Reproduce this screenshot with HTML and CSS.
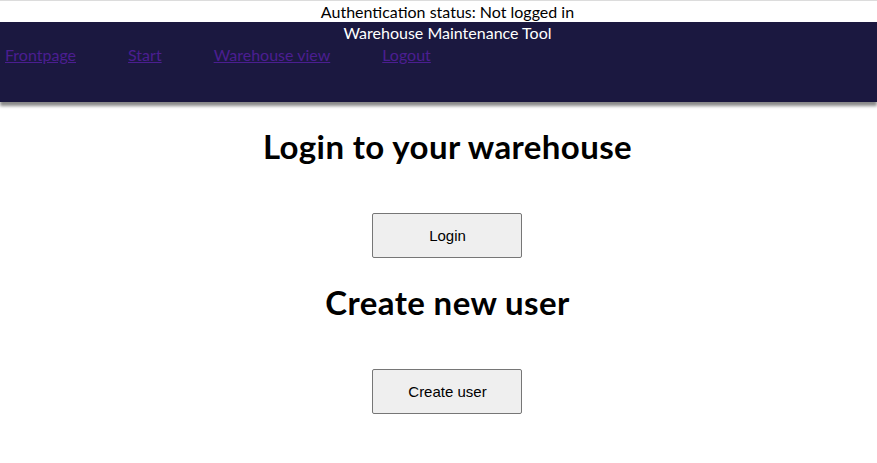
FILE: index.html
```html
<!DOCTYPE html>
<html>
<head>
<meta charset="utf-8">
<link rel="stylesheet" href="styles.css">
</head>
<body>
<div class="page">
  <div class="auth">Authentication status: Not logged in</div>
  <header class="navbar">
    <div class="title">Warehouse Maintenance Tool</div>
    <nav class="links">
      <a href="#">Frontpage</a>
      <a href="#">Start</a>
      <a href="#">Warehouse view</a>
      <a href="#">Logout</a>
    </nav>
  </header>
  <main class="content">
    <section class="block">
      <h1>Login to your warehouse</h1>
      <button class="btn">Login</button>
    </section>
    <section class="block">
      <h1>Create new user</h1>
      <button class="btn">Create user</button>
    </section>
  </main>
</div>
</body>
</html>
```
FILE: styles.css
```css
html, body {
  margin: 0;
  padding: 0;
  background: #ffffff;
}
body {
  font-family: "Lato", "Open Sans", sans-serif;
  font-size: 16px;
  color: #000;
}
.page {
  border-top: 1px solid #dcdcdc;
}
.auth {
  text-align: center;
  height: 21px;
  line-height: 21px;
  padding-left: 18px;
}
.navbar {
  background: #1b1840;
  height: 80px;
  box-shadow: 0 4px 3px #8a8a8a;
}
.title {
  color: #ffffff;
  text-align: center;
  font-size: 16px;
  line-height: 22px;
  padding-left: 18px;
}
.links {
  display: flex;
  gap: 52px;
  padding-left: 5px;
  line-height: 22px;
}
.links a {
  color: #4b1e91;
  text-decoration: underline;
}
.content {
  display: flex;
  flex-direction: column;
  align-items: center;
  padding-left: 18px;
}
.block {
  display: flex;
  flex-direction: column;
  align-items: center;
}
.block h1 {
  font-size: 33px;
  letter-spacing: 0.4px;
  font-weight: 700;
  margin: 0;
  line-height: 43px;
}
.block:first-child h1 {
  margin-top: 23px;
}
.btn {
  margin-top: 45px;
  margin-bottom: 23px;
  width: 150px;
  height: 45px;
  font-family: "Liberation Sans", Arial, sans-serif;
  font-size: 15px;
  color: #000;
  background: #efefef;
  border: 1px solid #767676;
  border-radius: 2px;
}
```
